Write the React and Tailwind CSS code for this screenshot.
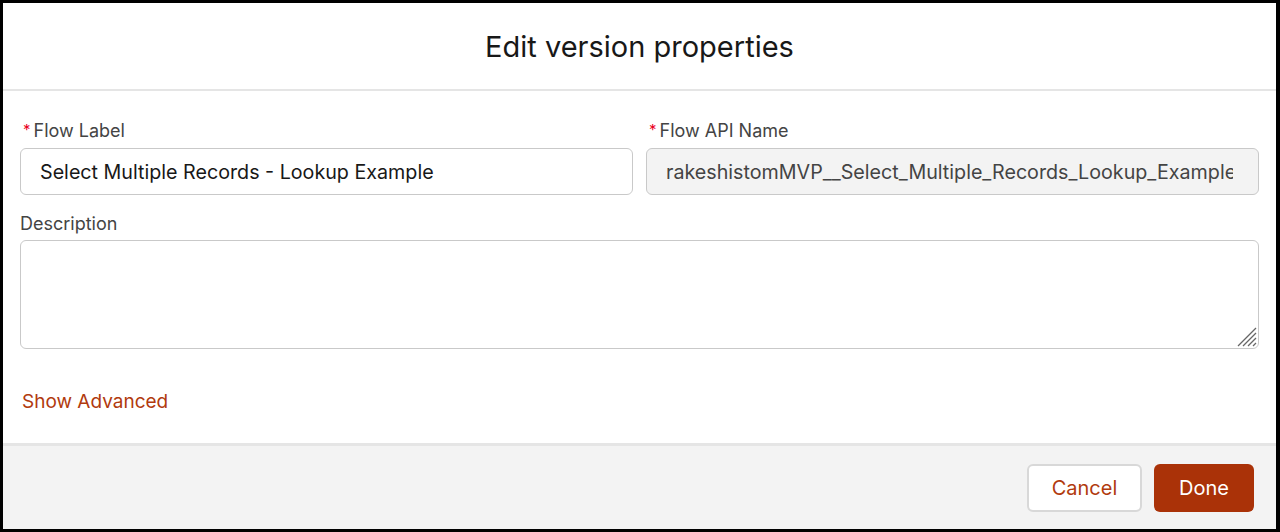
import React from "react";

export default function App() {
  const font = { fontFamily: 'Inter, "Liberation Sans", Arial, sans-serif' };
  return (
    <div className="w-[1280px] h-[532px] bg-black pt-[3px] pl-[3px] pr-[4px] pb-[3px]" style={font}>
      <div className="flex flex-col h-full bg-white">
        <div className="h-[88px] shrink-0 flex items-center justify-center border-b-2 border-[#e5e5e5]">
          <h1 className="text-[29px] leading-none text-[#181818] pt-[1px]">Edit version properties</h1>
        </div>
        <div className="flex-1 flex flex-col px-[17px] pt-[29px]">
          <div className="grid grid-cols-2 gap-[13px]">
            <div className="flex flex-col gap-[8px]">
              <label className="flex items-center h-[20px] text-[18px] text-[#444444] pl-[3px]">
                <span className="text-[#ea001e] mr-[3px] text-[15px]">*</span>Flow Label
              </label>
              <input
                className="h-[47px] w-full rounded-[6px] border border-[#c9c9c9] bg-white px-[19px] text-[19.7px] text-[#181818] outline-none"
                defaultValue="Select Multiple Records - Lookup Example"
                style={font}
              />
            </div>
            <div className="flex flex-col gap-[8px]">
              <label className="flex items-center h-[20px] text-[18px] text-[#444444] pl-[3px]">
                <span className="text-[#ea001e] mr-[3px] text-[15px]">*</span>Flow API Name
              </label>
              <input
                className="h-[47px] w-full rounded-[6px] border border-[#c9c9c9] bg-[#f3f3f3] pl-[19px] pr-[25px] text-[19.7px] text-[#444444] outline-none"
                defaultValue="rakeshistomMVP__Select_Multiple_Records_Lookup_Example"
                readOnly
                style={font}
              />
            </div>
          </div>
          <label className="flex items-center h-[20px] mt-[18px] text-[18px] text-[#444444]">Description</label>
          <div className="relative mt-[7px] h-[109px]">
            <textarea className="h-full w-full rounded-[6px] border border-[#c9c9c9] bg-white outline-none resize-none" />
            <svg className="absolute right-[2px] bottom-[2px]" width="20" height="20" viewBox="0 0 20 20">
              <g stroke="#666666" strokeWidth="1.3">
                <line x1="19" y1="1" x2="1" y2="19" />
                <line x1="19" y1="6" x2="6" y2="19" />
                <line x1="19" y1="11" x2="11" y2="19" />
                <line x1="19" y1="16" x2="16" y2="19" />
              </g>
            </svg>
          </div>
          <div className="mt-[43px] h-[20px] flex items-center pl-[2px]">
            <span className="text-[19px] text-[#b13a0e]">Show Advanced</span>
          </div>
        </div>
        <div className="h-[86px] shrink-0 border-t-[3px] border-[#e5e5e5] bg-[#f3f3f3] flex items-center justify-end gap-[12px] pr-[22px] pt-[1px]">
          <button className="h-[48px] w-[115px] rounded-[6px] border-2 border-[#d8d8d8] bg-white text-[20px] text-[#b13a0e]" style={font}>
            Cancel
          </button>
          <button className="h-[48px] w-[100px] rounded-[6px] bg-[#aa3208] text-[20px] text-white" style={font}>
            Done
          </button>
        </div>
      </div>
    </div>
  );
}
